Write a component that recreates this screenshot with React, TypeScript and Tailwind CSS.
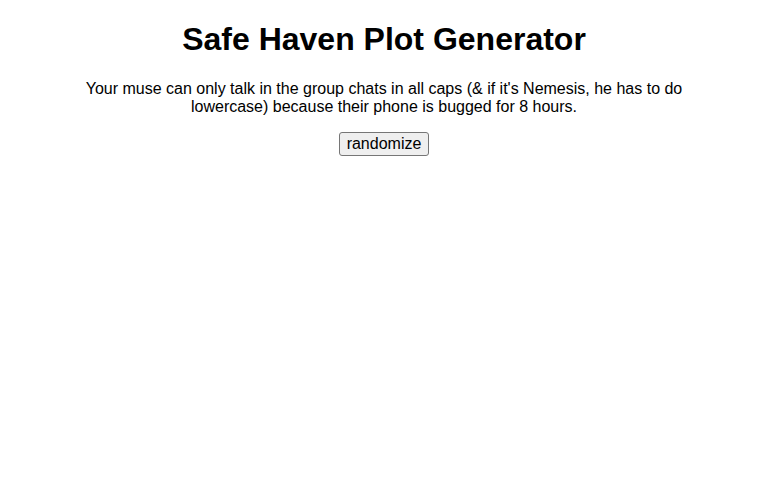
export default function App() {
  return (
    <div className="min-h-[480px] bg-white text-center text-black" style={{ fontFamily: '"Liberation Sans", Arial, sans-serif' }}>
      <h1 className="pt-[21px] text-[32px] font-bold leading-[37px]">Safe Haven Plot Generator</h1>
      <p className="mx-[85px] mt-[22px] text-[16px] leading-[18px]">
        Your muse can only talk in the group chats in all caps (&amp; if it's Nemesis, he has to do lowercase) because their phone is bugged for 8 hours.
      </p>
      <div className="mt-[16px] flex justify-center">
        <button className="h-[24px] rounded-[3px] border border-[#767676] bg-[#efefef] px-[7px] text-[16px] leading-[18px] text-black">
          randomize
        </button>
      </div>
    </div>
  );
}
